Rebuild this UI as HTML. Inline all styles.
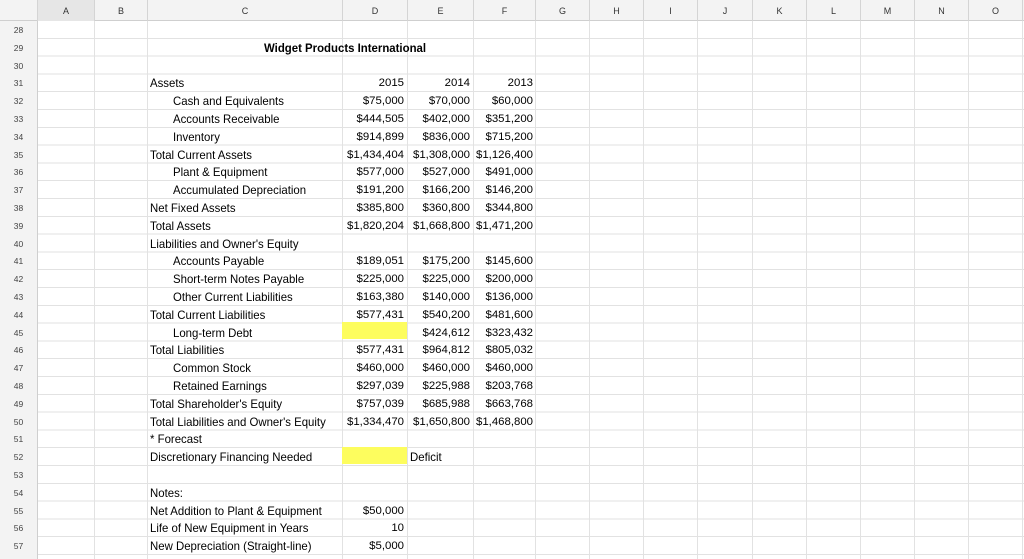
<!DOCTYPE html>
<html style="overflow:hidden;width:1024px;height:559px"><head><meta charset="utf-8"><style>
body{margin:0;width:1024px;height:559px;overflow:hidden;background:#fff;font-family:"Liberation Sans",Arial,sans-serif;position:relative}
.grid{position:absolute;left:0;top:21px;width:1024px;height:538px;background-image:repeating-linear-gradient(to bottom,transparent 0,transparent 16.8px,#e2e2e2 16.8px,#e2e2e2 17.8px)}
.v{position:absolute;top:0;height:559px;width:1px;background:#e2e2e2}
.hdr{position:absolute;left:0;top:0;width:1024px;height:21px;background:#f3f3f3;border-bottom:1px solid #cfcfcf;box-sizing:border-box}
.hc{position:absolute;top:0;height:21px;line-height:22px;text-align:center;font-size:9px;color:#333;border-right:1px solid #d4d4d4;box-sizing:border-box}
.rh{position:absolute;left:0;top:21px;width:38px;height:538px;background:#f3f3f3;border-right:1px solid #cfcfcf;box-sizing:border-box;overflow:hidden}
.rn{position:absolute;left:0;width:37px;text-align:center;font-size:8.5px;color:#444;height:17.8px;line-height:18px}
.r{position:absolute;left:0;width:1024px;height:17.8px;line-height:18px;font-size:12px;color:#000}
.r span{position:absolute;white-space:nowrap}
.t{display:inline-block;transform:scaleX(.95);transform-origin:left center}
.l{left:150px}.i{left:173px}
.d,.e,.f{font-size:11.4px}
.d{right:620px}.e{right:554px}.f{right:491px}
.y{position:absolute;left:342px;width:65px;height:17px;background:#fdfd5e}
</style></head><body>
<div class="grid"></div>
<div class="v" style="left:94px"></div><div class="v" style="left:147px"></div><div class="v" style="left:342px"></div><div class="v" style="left:407px"></div><div class="v" style="left:473px"></div><div class="v" style="left:535px"></div><div class="v" style="left:589px"></div><div class="v" style="left:643px"></div><div class="v" style="left:697px"></div><div class="v" style="left:752px"></div><div class="v" style="left:806px"></div><div class="v" style="left:860px"></div><div class="v" style="left:914px"></div><div class="v" style="left:968px"></div><div class="v" style="left:1022px"></div>
<div class="y" style="top:322.4px"></div>
<div class="y" style="top:447px"></div>
<div class="hdr">
<div class="hc" style="left:0;width:38px"></div>
<div class="hc" style="left:38px;width:57px;background:#e6e6e6">A</div>
<div class="hc" style="left:95px;width:53px">B</div>
<div class="hc" style="left:148px;width:195px">C</div>
<div class="hc" style="left:343px;width:65px">D</div>
<div class="hc" style="left:408px;width:66px">E</div>
<div class="hc" style="left:474px;width:62px">F</div>
<div class="hc" style="left:536px;width:54px">G</div>
<div class="hc" style="left:590px;width:54px">H</div>
<div class="hc" style="left:644px;width:54px">I</div>
<div class="hc" style="left:698px;width:55px">J</div>
<div class="hc" style="left:753px;width:54px">K</div>
<div class="hc" style="left:807px;width:54px">L</div>
<div class="hc" style="left:861px;width:54px">M</div>
<div class="hc" style="left:915px;width:54px">N</div>
<div class="hc" style="left:969px;width:54px">O</div>
</div>
<div class="rh">
<div class="rn" style="top:0">28</div><div class="rn" style="top:17.8px">29</div><div class="rn" style="top:35.6px">30</div><div class="rn" style="top:53.4px">31</div><div class="rn" style="top:71.2px">32</div><div class="rn" style="top:89px">33</div><div class="rn" style="top:106.8px">34</div><div class="rn" style="top:124.6px">35</div><div class="rn" style="top:142.4px">36</div><div class="rn" style="top:160.2px">37</div><div class="rn" style="top:178px">38</div><div class="rn" style="top:195.8px">39</div><div class="rn" style="top:213.6px">40</div><div class="rn" style="top:231.4px">41</div><div class="rn" style="top:249.2px">42</div><div class="rn" style="top:267px">43</div><div class="rn" style="top:284.8px">44</div><div class="rn" style="top:302.6px">45</div><div class="rn" style="top:320.4px">46</div><div class="rn" style="top:338.2px">47</div><div class="rn" style="top:356px">48</div><div class="rn" style="top:373.8px">49</div><div class="rn" style="top:391.6px">50</div><div class="rn" style="top:409.4px">51</div><div class="rn" style="top:427.2px">52</div><div class="rn" style="top:445px">53</div><div class="rn" style="top:462.8px">54</div><div class="rn" style="top:480.6px">55</div><div class="rn" style="top:498.4px">56</div><div class="rn" style="top:516.2px">57</div><div class="rn" style="top:534px">58</div>
</div>

<div class="r" style="top:38.8px"><span style="left:264px;font-weight:bold"><span class="t" style="position:static">Widget Products International</span></span></div>
<div class="r" style="top:74.4px"><span class="l"><span class="t" style="position:static">Assets</span></span><span class="d">2015</span><span class="e">2014</span><span class="f">2013</span></div>
<div class="r" style="top:92.2px"><span class="i"><span class="t" style="position:static">Cash and Equivalents</span></span><span class="d">$75,000</span><span class="e">$70,000</span><span class="f">$60,000</span></div>
<div class="r" style="top:110px"><span class="i"><span class="t" style="position:static">Accounts Receivable</span></span><span class="d">$444,505</span><span class="e">$402,000</span><span class="f">$351,200</span></div>
<div class="r" style="top:127.8px"><span class="i"><span class="t" style="position:static">Inventory</span></span><span class="d">$914,899</span><span class="e">$836,000</span><span class="f">$715,200</span></div>
<div class="r" style="top:145.6px"><span class="l"><span class="t" style="position:static">Total Current Assets</span></span><span class="d">$1,434,404</span><span class="e">$1,308,000</span><span class="f">$1,126,400</span></div>
<div class="r" style="top:163.4px"><span class="i"><span class="t" style="position:static">Plant &amp; Equipment</span></span><span class="d">$577,000</span><span class="e">$527,000</span><span class="f">$491,000</span></div>
<div class="r" style="top:181.2px"><span class="i"><span class="t" style="position:static">Accumulated Depreciation</span></span><span class="d">$191,200</span><span class="e">$166,200</span><span class="f">$146,200</span></div>
<div class="r" style="top:199px"><span class="l"><span class="t" style="position:static">Net Fixed Assets</span></span><span class="d">$385,800</span><span class="e">$360,800</span><span class="f">$344,800</span></div>
<div class="r" style="top:216.8px"><span class="l"><span class="t" style="position:static">Total Assets</span></span><span class="d">$1,820,204</span><span class="e">$1,668,800</span><span class="f">$1,471,200</span></div>
<div class="r" style="top:234.6px"><span class="l"><span class="t" style="position:static">Liabilities and Owner's Equity</span></span></div>
<div class="r" style="top:252.4px"><span class="i"><span class="t" style="position:static">Accounts Payable</span></span><span class="d">$189,051</span><span class="e">$175,200</span><span class="f">$145,600</span></div>
<div class="r" style="top:270.2px"><span class="i"><span class="t" style="position:static">Short-term Notes Payable</span></span><span class="d">$225,000</span><span class="e">$225,000</span><span class="f">$200,000</span></div>
<div class="r" style="top:288px"><span class="i"><span class="t" style="position:static">Other Current Liabilities</span></span><span class="d">$163,380</span><span class="e">$140,000</span><span class="f">$136,000</span></div>
<div class="r" style="top:305.8px"><span class="l"><span class="t" style="position:static">Total Current Liabilities</span></span><span class="d">$577,431</span><span class="e">$540,200</span><span class="f">$481,600</span></div>
<div class="r" style="top:323.6px"><span class="i"><span class="t" style="position:static">Long-term Debt</span></span><span class="e">$424,612</span><span class="f">$323,432</span></div>
<div class="r" style="top:341.4px"><span class="l"><span class="t" style="position:static">Total Liabilities</span></span><span class="d">$577,431</span><span class="e">$964,812</span><span class="f">$805,032</span></div>
<div class="r" style="top:359.2px"><span class="i"><span class="t" style="position:static">Common Stock</span></span><span class="d">$460,000</span><span class="e">$460,000</span><span class="f">$460,000</span></div>
<div class="r" style="top:377px"><span class="i"><span class="t" style="position:static">Retained Earnings</span></span><span class="d">$297,039</span><span class="e">$225,988</span><span class="f">$203,768</span></div>
<div class="r" style="top:394.8px"><span class="l"><span class="t" style="position:static">Total Shareholder's Equity</span></span><span class="d">$757,039</span><span class="e">$685,988</span><span class="f">$663,768</span></div>
<div class="r" style="top:412.6px"><span class="l"><span class="t" style="position:static">Total Liabilities and Owner's Equity</span></span><span class="d">$1,334,470</span><span class="e">$1,650,800</span><span class="f">$1,468,800</span></div>
<div class="r" style="top:430.4px"><span class="l"><span class="t" style="position:static">* Forecast</span></span></div>
<div class="r" style="top:448.2px"><span class="l"><span class="t" style="position:static">Discretionary Financing Needed</span></span><span style="left:410px"><span class="t" style="position:static">Deficit</span></span></div>
<div class="r" style="top:483.8px"><span class="l"><span class="t" style="position:static">Notes:</span></span></div>
<div class="r" style="top:501.6px"><span class="l"><span class="t" style="position:static">Net Addition to Plant &amp; Equipment</span></span><span class="d">$50,000</span></div>
<div class="r" style="top:519.4px"><span class="l"><span class="t" style="position:static">Life of New Equipment in Years</span></span><span class="d">10</span></div>
<div class="r" style="top:537.2px"><span class="l"><span class="t" style="position:static">New Depreciation (Straight-line)</span></span><span class="d">$5,000</span></div>
</body></html>
